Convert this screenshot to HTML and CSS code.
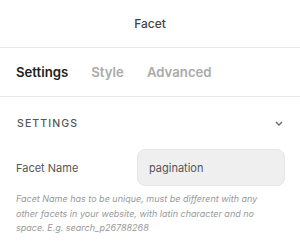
FILE: index.html
```html
<!DOCTYPE html>
<html>
<head>
<meta charset="utf-8">
<link rel="stylesheet" href="styles.css">
</head>
<body>
<div class="panel">
  <div class="header">Facet</div>
  <div class="tabs">
    <span class="tab active">Settings</span>
    <span class="tab">Style</span>
    <span class="tab">Advanced</span>
  </div>
  <div class="section">
    <div class="section-head">
      <span class="section-title">SETTINGS</span>
      <svg class="chev" width="8" height="5" viewBox="0 0 8 5"><path d="M1 1l3 3 3-3" fill="none" stroke="#666" stroke-width="1.3"/></svg>
    </div>
    <div class="row">
      <span class="label">Facet Name</span>
      <div class="input">pagination</div>
    </div>
    <p class="help">Facet Name has to be unique, must be different with any other facets in your website, with latin character and no space. E.g. search_p26788268</p>
  </div>
</div>
</body>
</html>
```
FILE: styles.css
```css
* { box-sizing: border-box; }
body { margin: 0; background: #fff; font-family: Inter, "Noto Sans", sans-serif; }
.panel { width: 300px; height: 244px; overflow: hidden; }
.header {
  height: 48px; border-bottom: 1px solid #e8e8e8;
  display: flex; align-items: center; justify-content: center;
  font-size: 12px; font-weight: 500; color: #444;
}
.tabs {
  height: 49px; border-bottom: 1px solid #e8e8e8;
  display: flex; align-items: center; gap: 23px; padding-left: 16px; padding-bottom: 1px;
}
.tab { font-size: 13.2px; font-weight: 600; color: #aaa; }
.tab.active { color: #222; }
.section { padding: 0 15px 0 16px; }
.section-head {
  height: 52px; display: flex; align-items: center; justify-content: space-between;
  padding-top: 1px;
}
.section-title { font-size: 10.5px; font-weight: 500; letter-spacing: 1.1px; color: #555; margin-left: 1px; }
.chev { margin-right: 2px; }
.row { display: flex; align-items: center; height: 37px; }
.label { width: 121px; font-size: 11px; color: #555; }
.input {
  flex: 1; height: 37px; background: #efefef; border: 1px solid #e6e6e6; border-radius: 8px;
  display: flex; align-items: center; padding-left: 11px;
  font-size: 11px; color: #555;
}
.help {
  margin: 6px 0 0; font-size: 9px; line-height: 14.5px; font-style: italic; color: #999;
  width: 262px;
}
```
